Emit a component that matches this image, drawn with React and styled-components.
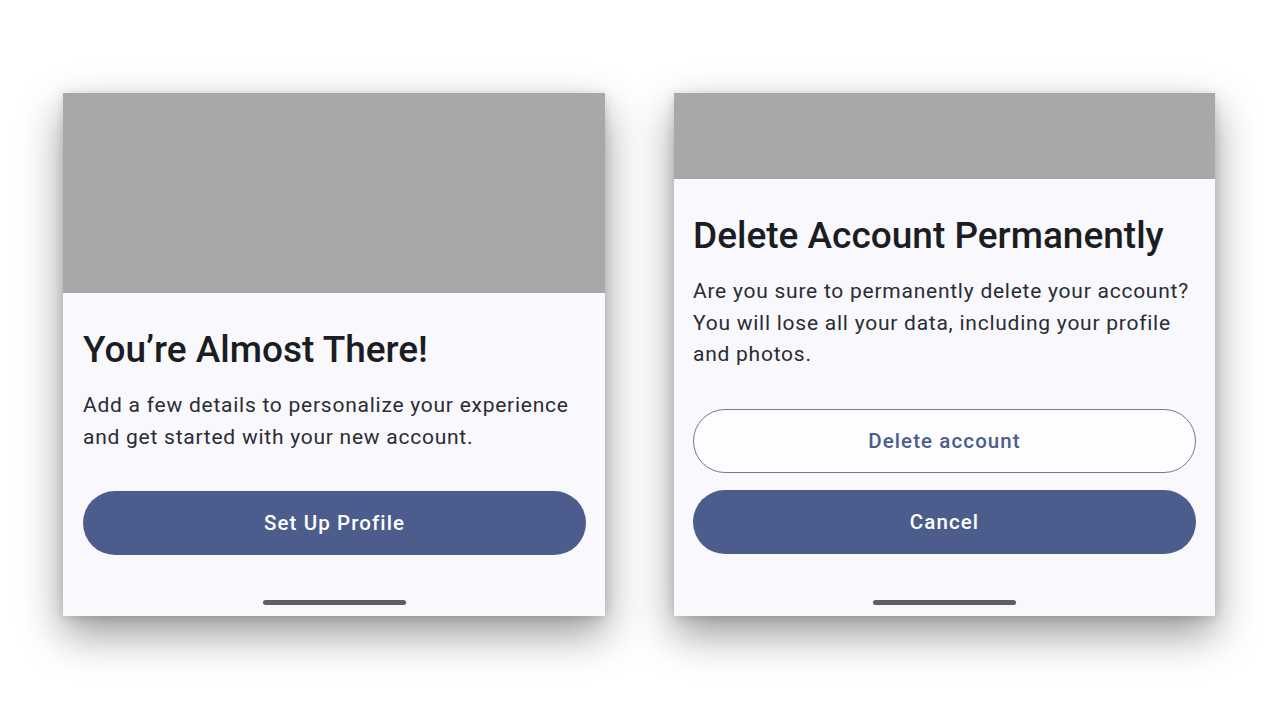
import styled, { createGlobalStyle } from "styled-components";

const Global = createGlobalStyle`
  html, body {
    margin: 0;
    padding: 0;
    background: #ffffff;
    font-family: Roboto, "Noto Sans", sans-serif;
  }
`;

const Page = styled.div`
  width: 1280px;
  height: 720px;
  box-sizing: border-box;
  padding: 93px 0 0 63px;
  display: flex;
  align-items: flex-start;
  gap: 69px;
`;

const Card = styled.div`
  width: ${(p) => p.$w}px;
  height: 523px;
  background: #f8f8fd;
  display: flex;
  flex-direction: column;
  box-shadow: 0 18px 40px rgba(0, 0, 0, 0.4), 0 2px 10px rgba(0, 0, 0, 0.14);
`;

const Hero = styled.div`
  height: ${(p) => p.$h}px;
  background: #a8a8aa;
  flex-shrink: 0;
`;

const Body = styled.div`
  flex: 1;
  display: flex;
  flex-direction: column;
  padding: 34px 19px 11px ${(p) => p.$left}px;
`;

const Title = styled.h1`
  margin: 0;
  font-size: 37px;
  line-height: 46px;
  font-weight: 500;
  color: #1c1d22;
  letter-spacing: 0;
`;

const Text = styled.p`
  margin: 17px 0 0;
  font-size: 21px;
  line-height: 31.5px;
  letter-spacing: 0.75px;
  color: #2a2c33;
`;

const Actions = styled.div`
  margin-top: 38px;
  display: flex;
  flex-direction: column;
  gap: 17px;
`;

const Button = styled.button`
  height: 64px;
  width: 100%;
  border-radius: 32px;
  font-family: Roboto, "Noto Sans", sans-serif;
  font-size: 20.5px;
  font-weight: 500;
  letter-spacing: 1.1px;
  cursor: pointer;
  background: ${(p) => (p.$outline ? "#fdfcff" : "#4c5c8c")};
  color: ${(p) => (p.$outline ? "#4c5c8c" : "#ffffff")};
  border: ${(p) => (p.$outline ? "1.3px solid #7a7980" : "none")};
`;

const Handle = styled.div`
  margin: auto auto 0;
  width: 143px;
  height: 5px;
  border-radius: 3px;
  background: #5f5f63;
`;

export default function App() {
  return (
    <>
      <Global />
      <Page>
        <Card $w={542}>
          <Hero $h={200} />
          <Body $left={20}>
            <Title>You’re Almost There!</Title>
            <Text>
              Add a few details to personalize your experience and get started
              with your new account.
            </Text>
            <Actions>
              <Button>Set Up Profile</Button>
            </Actions>
            <Handle />
          </Body>
        </Card>
        <Card $w={541}>
          <Hero $h={86} />
          <Body $left={19}>
            <Title>Delete Account Permanently</Title>
            <Text>
              Are you sure to permanently delete your account? You will lose all
              your data, including your profile and photos.
            </Text>
            <Actions>
              <Button $outline>Delete account</Button>
              <Button>Cancel</Button>
            </Actions>
            <Handle />
          </Body>
        </Card>
      </Page>
    </>
  );
}
